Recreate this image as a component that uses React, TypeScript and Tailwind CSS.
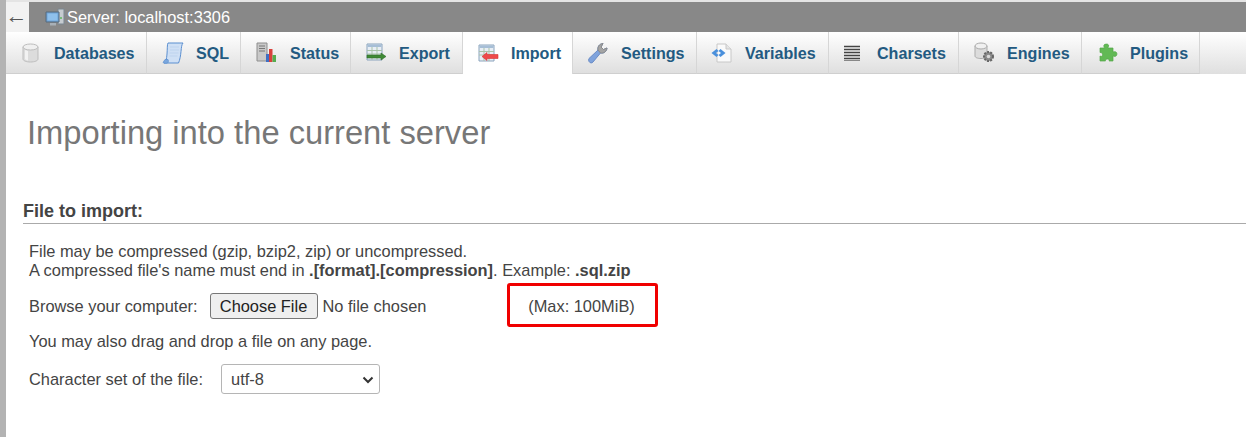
import { ReactNode } from 'react'

const DatabaseIcon = () => (
  <svg width="17" height="20" viewBox="0 0 17 20">
    <path d="M1 4v12c0 1.700 3.200 3 7.500 3s7.500-1.300 7.500-3V4z" fill="#dcdcdc" stroke="#bdbdbd" />
    <path d="M3 7v9c1 1 2 1.300 3 1.500V8z" fill="#f2f2f2" />
    <ellipse cx="8.500" cy="4" rx="7.500" ry="3" fill="#f0f0f0" stroke="#bdbdbd" />
  </svg>
)

const SqlIcon = () => (
  <svg width="22" height="22" viewBox="0 0 22 22">
    <path d="M6 1h15c-1.500 2-1.500 4-2 8.500s-1 8-2.500 11.500H2c2-1 2.500-3.500 3-9s0-9 1-11z" fill="#cfe0f5" stroke="#5b8fd0" />
    <path d="M1 20.500c1 1 3.500 1 4.500.5s1.200-2.500.5-3.500H3z" fill="#7ba7de" stroke="#5b8fd0" strokeWidth=".7" />
    <path d="M8 5h9M8 8h9M7.500 11h9M7.500 14h8" stroke="#bdd3ee" />
  </svg>
)

const StatusIcon = () => (
  <svg width="21" height="21" viewBox="0 0 21 21">
    <path d="M1 1h10v18H1z" fill="#c9c9c9" stroke="#8e8e8e" />
    <path d="M3 4h6M3 6.500h6M3 9h6" stroke="#777" />
    <path d="M10 12h3v8h-3z" fill="#3f6fc4" />
    <path d="M13 7h3.500v13H13z" fill="#d9413c" />
    <path d="M16.500 13H20v7h-3.500z" fill="#55ad4f" />
  </svg>
)

const TableIcon = () => (
  <>
    <path d="M1 1h15v16H1z" fill="#e8eef5" stroke="#8ba4bd" />
    <path d="M1.500 1.500h14V4h-14z" fill="#a6bed6" />
    <path d="M1 7.500h15M1 11h15M6 4v13M11 4v13" stroke="#a9c4a9" />
  </>
)

const ExportIcon = () => (
  <svg width="21" height="19" viewBox="0 0 21 19">
    <TableIcon />
    <path d="M1 12h14v-2l5 3.500-5 3.500v-2H1z" fill="#3f8a35" stroke="#2f6d28" strokeWidth=".6" />
  </svg>
)

const ImportIcon = () => (
  <svg width="21" height="19" viewBox="0 0 21 19">
    <TableIcon />
    <path d="M20 10.500H9V8.500l-5 4 5 4v-2h11z" fill="#ee4a4a" stroke="#d93636" strokeWidth=".6" />
  </svg>
)

const SettingsIcon = () => (
  <svg width="22" height="22" viewBox="0 0 22 22">
    <path d="M2 16.500 11 8c-.5-3 1-6 5-6.500l-2 3.500 2.500 2.500L20 6c-.5 4-3.500 5.500-6.500 5L6 20c-2 2.500-5.500-.5-4-3.500z" fill="#7fa3dc" stroke="#6a8cc6" />
    <path d="M11 8c-.5-3 1-6 5-6.500l-2 3.500 2.500 2.500L20 6c-.5 4-3.500 5.500-6.500 5z" fill="#a5a5a5" stroke="#8a8a8a" />
  </svg>
)

const VariablesIcon = () => (
  <svg width="21" height="20" viewBox="0 0 21 20">
    <path d="M6 1h9l5 5v13H6z" fill="#fafafa" stroke="#c8c8c8" />
    <path d="M15 1v5h5" fill="#e5e5e5" stroke="#c8c8c8" />
    <path d="M5.500 6 .5 10l5 4 2-2-2.500-2 2.500-2z" fill="#4a90dc" />
    <path d="M9.500 6l5 4-5 4-2-2 2.500-2-2.500-2z" fill="#4a90dc" />
  </svg>
)

const CharsetsIcon = () => (
  <svg width="16" height="16" viewBox="0 0 16 16">
    <path d="M0 1.500h16M0 4.500h16M0 7.500h16M0 10.500h16M0 13.500h16" stroke="#444" strokeWidth="1.500" />
    <path d="M0 15.500h16" stroke="#888" />
  </svg>
)

const EnginesIcon = () => (
  <svg width="21" height="21" viewBox="0 0 21 21">
    <path d="M1 4v10c0 1.500 2.500 2.500 6 2.500s6-1 6-2.500V4z" fill="#dcdcdc" stroke="#ababab" />
    <ellipse cx="7" cy="4" rx="6" ry="3" fill="#f0f0f0" stroke="#ababab" />
    <circle cx="14.500" cy="14.500" r="4.500" fill="#8b8b8b" stroke="#666" strokeWidth="2" strokeDasharray="2 1.200" />
    <circle cx="14.500" cy="14.500" r="1.800" fill="#dadada" />
  </svg>
)

const PluginsIcon = () => (
  <svg width="19" height="19" viewBox="0 0 19 19">
    <path d="M1 5h4.500C5 4 4.500 3 5 2s4-1.500 4.500 0-.500 2-.500 3H14v4c1-.500 2-.500 3 0s1.500 3 0 4-2 0-3 0v5H10c.5-1 0-2-1.500-2s-2.500 1-2 2H1v-5c1 .500 2 .500 2.500-.500S3 9 1 9.500z" fill="#62b955" stroke="#55a849" strokeWidth=".7" />
  </svg>
)

const ServerIcon = () => (
  <svg width="20" height="19" viewBox="0 0 20 19">
    <path d="M13 1h6v15h-6z" fill="#c6ccd1" stroke="#7b8791" />
    <circle cx="16" cy="10" r="1" fill="#5cb85c" />
    <path d="M1 4h13v10H1z" fill="#6fa3d8" stroke="#566a7c" />
    <path d="M2.500 5.500h10v7h-10z" fill="#8fc0ec" />
    <path d="M5 15h6v2.500H5z" fill="#a8b0b7" />
  </svg>
)

type TabProps = {
  icon: ReactNode
  label: string
  width: string
  gap: string
  pad: string
  active?: boolean
}

function Tab({ icon, label, width, gap, pad, active }: TabProps) {
  return (
    <div
      className={`flex items-center h-full shrink-0 border-r border-[#d6d6d6] ${width} ${pad} ${gap} ${
        active ? 'bg-white' : 'bg-gradient-to-b from-white to-[#dfdfdf] border-b border-b-[#cfcfcf]'
      }`}
    >
      <span className="flex w-[22px] justify-center shrink-0">{icon}</span>
      <span className="pt-[1px] text-[16.1px] font-bold text-[#235a81] whitespace-nowrap">{label}</span>
    </div>
  )
}

export default function App() {
  return (
    <div className="relative flex w-[1246px] h-[437px] overflow-hidden bg-white font-['Liberation_Sans',Arial,sans-serif] text-[#444]">
      <div className="w-[6px] shrink-0 bg-[#b3b3b3]" />

      <div className="flex-1 min-w-0">
        <div className="flex h-[32px] border-t-[2px] border-[#e4e4e4] bg-[#888]">
          <div className="flex w-[23px] items-center justify-center bg-[#f2f2f2] pr-[2px] pb-[2px] text-[22px] text-[#555] leading-none">←</div>
          <div className="ml-[16px] flex items-center gap-[2px] text-[16.4px] text-white">
            <ServerIcon />
            <span>Server: localhost:3306</span>
          </div>
        </div>

        <div className="flex h-[42px] bg-gradient-to-b from-white to-[#dfdfdf]">
          <Tab icon={<DatabaseIcon />} label="Databases" width="w-[141px]" pad="pl-[13px]" gap="gap-[13px]" />
          <Tab icon={<SqlIcon />} label="SQL" width="w-[94px]" pad="pl-[15px]" gap="gap-[12px]" />
          <Tab icon={<StatusIcon />} label="Status" width="w-[110px]" pad="pl-[14px]" gap="gap-[13px]" />
          <Tab icon={<ExportIcon />} label="Export" width="w-[112px]" pad="pl-[14px]" gap="gap-[12px]" />
          <Tab icon={<ImportIcon />} label="Import" width="w-[110px]" pad="pl-[14px]" gap="gap-[12px]" active />
          <Tab icon={<SettingsIcon />} label="Settings" width="w-[124px]" pad="pl-[14px]" gap="gap-[12px]" />
          <Tab icon={<VariablesIcon />} label="Variables" width="w-[132px]" pad="pl-[13px]" gap="gap-[13px]" />
          <Tab icon={<CharsetsIcon />} label="Charsets" width="w-[130px]" pad="pl-[12px]" gap="gap-[14px]" />
          <Tab icon={<EnginesIcon />} label="Engines" width="w-[123px]" pad="pl-[14px]" gap="gap-[12px]" />
          <Tab icon={<PluginsIcon />} label="Plugins" width="w-[118px]" pad="pl-[15px]" gap="gap-[11px]" />
        </div>

        <h1 className="mt-[39px] ml-[21px] text-[32.7px] leading-[40px] text-[#777]">Importing into the current server</h1>

        <div className="mt-[48px] ml-[17px]">
          <h2 className="border-b border-[#aaa] pb-[2px] text-[18px] leading-[20px] font-bold text-[#444]">File to import:</h2>

          <div className="ml-[6px] text-[16.4px] leading-[19px]">
            <p className="mt-[18px]">
              File may be compressed (gzip, bzip2, zip) or uncompressed.
              <br />
              A compressed file's name must end in <b>.[format].[compression]</b>. Example: <b>.sql.zip</b>
            </p>

            <div className="mt-[12px] flex items-center h-[28px]">
              <span>Browse your computer:</span>
              <button className="ml-[12px] h-[26px] w-[108px] rounded-[3px] border border-[#777] bg-[#efefef] text-[16.4px] text-[#222]">
                Choose File
              </button>
              <span className="ml-[5px] text-[#444]">No file chosen</span>
            </div>

            <p className="mt-[12px]">You may also drag and drop a file on any page.</p>

            <div className="mt-[13px] flex items-center">
              <span>Character set of the file:</span>
              <div className="relative ml-[18px]">
                <select className="block h-[30px] w-[159px] appearance-none rounded-[3px] border border-[#b5b5b5] bg-white pl-[9px] text-[16.4px] text-[#444]">
                  <option>utf-8</option>
                </select>
                <svg className="absolute right-[6px] top-[12px] pointer-events-none" width="12" height="8" viewBox="0 0 12 8">
                  <path d="M1.500 1.500 6 6l4.500-4.500" fill="none" stroke="#333" strokeWidth="2" />
                </svg>
              </div>
            </div>
          </div>
        </div>
      </div>

      {/* red annotation box drawn over the screenshot */}
      <div className="absolute left-[507px] top-[283px] flex h-[44px] w-[151px] items-center justify-center rounded-[3px] border-[3px] border-[#f00000] pt-[2px] pr-[2px] text-[16.4px] text-[#444]">
        (Max: 100MiB)
      </div>
    </div>
  )
}
